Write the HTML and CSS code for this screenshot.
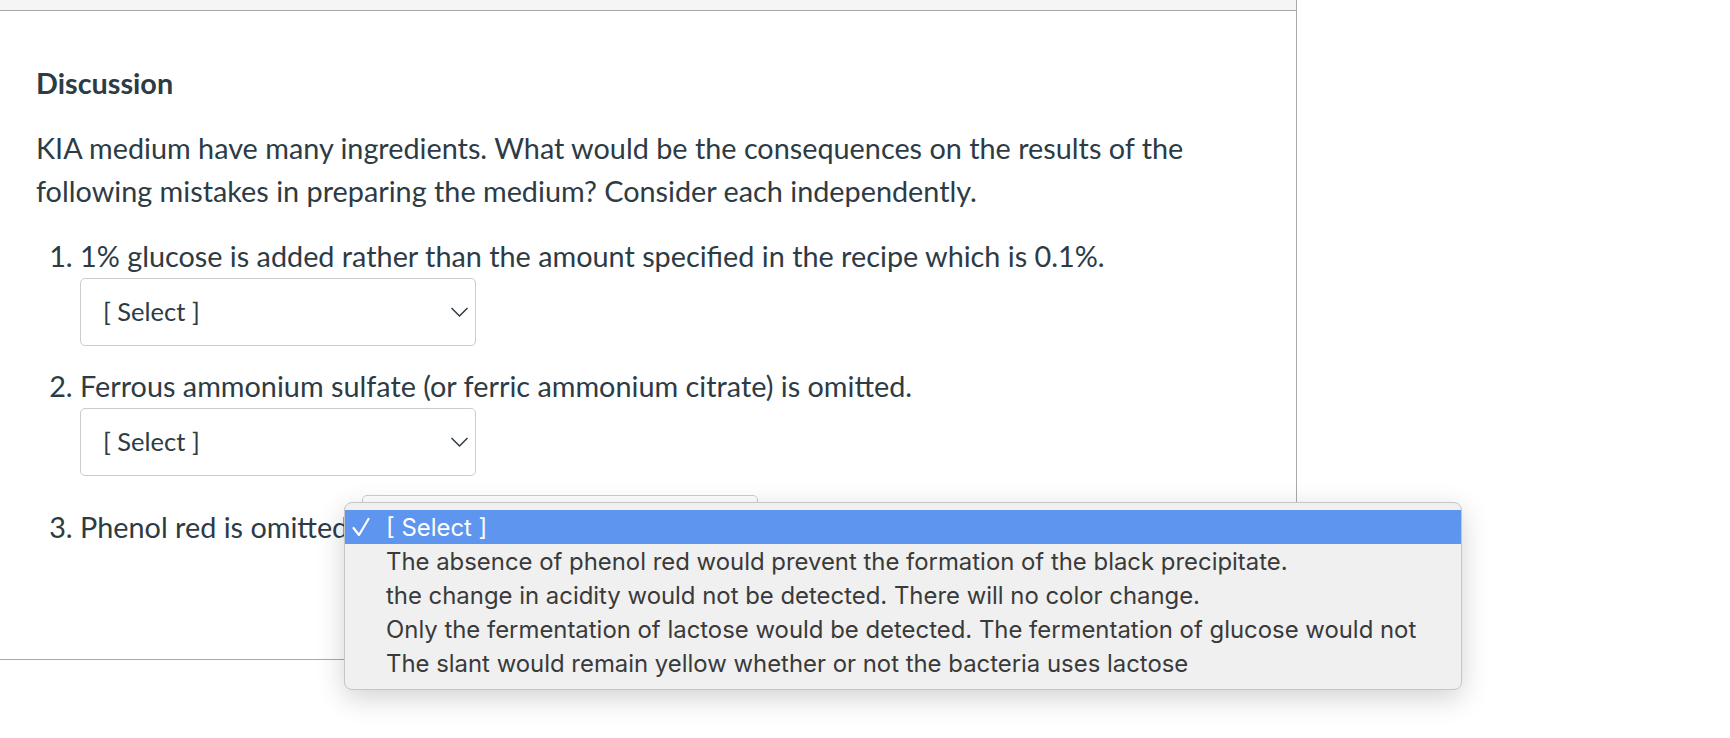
FILE: index.html
```html
<!DOCTYPE html>
<html lang="en">
<head>
    <meta charset="UTF-8">
    <meta name="viewport" content="width=device-width, initial-scale=1.0">
    <title>Discussion</title>
    <link rel="stylesheet" href="styles.css">
</head>
<body>
    <div class="page">
        <div class="question">
            <div class="question-header"></div>
            <div class="question-body">
                <h3 class="question-title">Discussion</h3>
                <p class="question-text">KIA medium have many ingredients. What would be the consequences on the results of the following mistakes in preparing the medium? Consider each independently.</p>
                <ol class="question-list">
                    <li>1% glucose is added rather than the amount specified in the recipe which is 0.1%.
                        <span class="select-box">
                            <span class="select-label">[ Select ]</span>
                            <svg class="select-arrow" width="20" height="12" viewBox="0 0 20 12"><path d="M2.5 2 L10.5 10 L18.5 2" fill="none" stroke="#2d3b45" stroke-width="1.5"/></svg>
                        </span>
                    </li>
                    <li>Ferrous ammonium sulfate (or ferric ammonium citrate) is omitted.
                        <span class="select-box">
                            <span class="select-label">[ Select ]</span>
                            <svg class="select-arrow" width="20" height="12" viewBox="0 0 20 12"><path d="M2.5 2 L10.5 10 L18.5 2" fill="none" stroke="#2d3b45" stroke-width="1.5"/></svg>
                        </span>
                    </li>
                    <li>Phenol red is omitted.
                        <span class="select-box select-open">
                            <span class="select-label">[ Select ]</span>
                            <svg class="select-arrow" width="20" height="12" viewBox="0 0 20 12"><path d="M2.5 2 L10.5 10 L18.5 2" fill="none" stroke="#2d3b45" stroke-width="1.5"/></svg>
                        </span>
                    </li>
                </ol>
            </div>
        </div>

        <ul class="dropdown-menu">
            <li class="dropdown-item selected">
                <span class="check"><svg width="18" height="20" viewBox="0 0 18 20"><path d="M1.5 11 L7 18 L16.5 2" fill="none" stroke="#fff" stroke-width="2.2" stroke-linecap="round" stroke-linejoin="round"/></svg></span>[ Select ]
            </li>
            <li class="dropdown-item"><span class="check"></span>The absence of phenol red would prevent the formation of the black precipitate.</li>
            <li class="dropdown-item"><span class="check"></span>the change in acidity would not be detected. There will no color change.</li>
            <li class="dropdown-item"><span class="check"></span>Only the fermentation of lactose would be detected. The fermentation of glucose would not</li>
            <li class="dropdown-item"><span class="check"></span>The slant would remain yellow whether or not the bacteria uses lactose</li>
        </ul>
    </div>
</body>
</html>
```

FILE: styles.css
```css
body {
    margin: 0;
    background: #fff;
    font-family: Lato, "Open Sans", sans-serif;
    color: #2d3b45;
}
.page {
    position: relative;
    width: 1730px;
    height: 738px;
    overflow: hidden;
}
.question {
    width: 1297px;
    height: 660px;
    box-sizing: border-box;
    border-right: 1px solid #a9a9a9;
    border-bottom: 1px solid #a9a9a9;
}
.question-header {
    height: 10px;
    background: #f5f5f5;
    border-bottom: 1px solid #a9a9a9;
}
.question-body {
    padding: 0 36px;
}
.question-title {
    margin: 51px 0 0;
    font-size: 28.8px;
    line-height: 43.2px;
    font-weight: 700;
}
.question-text {
    margin: 22px 0 0;
    font-size: 28.8px;
    line-height: 43.2px;
}
.question-list {
    margin: 21px 0 0;
    padding-left: 44px;
    font-size: 28.8px;
    line-height: 43.2px;
}
.question-list li {
    margin-bottom: 19px;
}
.select-box {
    display: inline-flex;
    align-items: center;
    justify-content: space-between;
    box-sizing: border-box;
    width: 396px;
    height: 68px;
    padding: 0 6px 0 22px;
    border: 1px solid #c7cdd1;
    border-radius: 5px;
    background: #fff;
    font-size: 25.5px;
    line-height: 1;
}
/* the open select sits under the native menu, its label is covered */
.select-open .select-label {
    visibility: hidden;
}
.select-arrow {
    display: block;
}
.dropdown-menu {
    position: absolute;
    left: 344px;
    top: 502px;
    width: 1118px;
    margin: 0;
    padding: 7px 0 9px;
    list-style: none;
    box-sizing: border-box;
    background: #f0f0f0;
    border: 1px solid #c6c6c6;
    border-radius: 8px;
    box-shadow: 0 8px 28px rgba(0, 0, 0, 0.18);
    font-family: Inter, "Liberation Sans", sans-serif;
    font-size: 23.9px;
    color: #3a3a3a;
}
.dropdown-item {
    display: flex;
    align-items: center;
    height: 34px;
    padding-left: 7px;
    white-space: nowrap;
}
.dropdown-item.selected {
    background: #5e95ef;
    color: #fff;
}
.check {
    display: flex;
    align-items: center;
    width: 34px;
    flex-shrink: 0;
}
```
